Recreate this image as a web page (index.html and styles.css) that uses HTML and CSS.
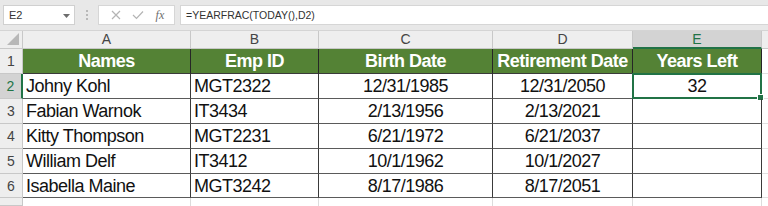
FILE: index.html
```html
<!DOCTYPE html>
<html>
<head>
<meta charset="utf-8">
<link rel="stylesheet" href="styles.css">
</head>
<body>
<div class="fbar">
  <div class="namebox"><span>E2</span><svg class="caret" width="7" height="4" viewBox="0 0 7 4"><path d="M0 0H7L3.5 4Z" fill="#6d6d6d"/></svg></div>
  <div class="dots"><i></i><i></i><i></i></div>
  <div class="fxbox">
    <svg width="10" height="10" viewBox="0 0 10 10"><path d="M1 1L9 9M9 1L1 9" stroke="#b4b4b4" stroke-width="1.2" fill="none"/></svg>
    <svg width="12" height="10" viewBox="0 0 12 10"><path d="M1 5L4.5 8.5L11 1.5" stroke="#b4b4b4" stroke-width="1.2" fill="none"/></svg>
    <span class="fx">fx</span>
  </div>
  <div class="formula">=YEARFRAC(TODAY(),D2)</div>
</div>
<div class="sheet">
  <div class="corner"><svg width="12" height="12" viewBox="0 0 12 12"><path d="M12 0V12H0Z" fill="#b8b8b8"/></svg></div>
  <div class="ch">A</div><div class="ch">B</div><div class="ch">C</div><div class="ch">D</div><div class="ch sel">E</div><div class="ch end"></div>

  <div class="rh">1</div>
  <div class="hd">Names</div><div class="hd">Emp ID</div><div class="hd">Birth Date</div><div class="hd">Retirement Date</div><div class="hd">Years Left</div><div class="blank"></div>

  <div class="rh rsel">2</div>
  <div class="c l">Johny Kohl</div><div class="c l">MGT2322</div><div class="c">12/31/1985</div><div class="c">12/31/2050</div><div class="c active">32<span class="handle"></span></div><div class="blank"></div>

  <div class="rh">3</div>
  <div class="c l">Fabian Warnok</div><div class="c l">IT3434</div><div class="c">2/13/1956</div><div class="c">2/13/2021</div><div class="c"></div><div class="blank"></div>

  <div class="rh">4</div>
  <div class="c l">Kitty Thompson</div><div class="c l">MGT2231</div><div class="c">6/21/1972</div><div class="c">6/21/2037</div><div class="c"></div><div class="blank"></div>

  <div class="rh">5</div>
  <div class="c l">William Delf</div><div class="c l">IT3412</div><div class="c">10/1/1962</div><div class="c">10/1/2027</div><div class="c"></div><div class="blank"></div>

  <div class="rh">6</div>
  <div class="c l">Isabella Maine</div><div class="c l">MGT3242</div><div class="c">8/17/1986</div><div class="c">8/17/2051</div><div class="c"></div><div class="blank"></div>

  <div class="rh"></div>
  <div class="e"></div><div class="e"></div><div class="e"></div><div class="e"></div><div class="e"></div><div class="blank2"></div>
</div>
</body>
</html>
```
FILE: styles.css
```css
html, body {
  margin: 0;
  padding: 0;
}
body {
  width: 768px;
  height: 206px;
  overflow: hidden;
  background: #fff;
  font-family: "Liberation Sans", Arial, sans-serif;
}
.fbar {
  height: 31px;
  box-sizing: border-box;
  background: #e8e8e8;
  border-bottom: 1px solid #d4d4d4;
  display: flex;
  align-items: flex-start;
  padding: 5px 0 0 3px;
}
.namebox {
  width: 72px;
  height: 20px;
  box-sizing: border-box;
  background: #fff;
  border: 1px solid #d0d0d0;
  display: flex;
  align-items: center;
  justify-content: space-between;
  padding: 0 4px 0 5px;
  font-size: 11px;
  color: #333;
}
.caret { margin-top: 1px; }
.dots {
  width: 23px;
  height: 20px;
  display: flex;
  flex-direction: column;
  align-items: center;
  justify-content: center;
  gap: 2px;
}
.dots i {
  display: block;
  width: 2px;
  height: 2px;
  background: #b8b8b8;
}
.fxbox {
  width: 77px;
  height: 20px;
  box-sizing: border-box;
  background: #fff;
  border: 1px solid #d6d6d6;
  display: flex;
  align-items: center;
  justify-content: space-around;
  padding: 0 4px 0 6px;
}
.fx {
  font-family: "Liberation Serif", serif;
  font-style: italic;
  font-size: 12px;
  color: #6e6e6e;
}
.formula {
  flex: 1;
  height: 20px;
  margin-left: 5px;
  box-sizing: border-box;
  background: #fff;
  border: 1px solid #d6d6d6;
  border-right: none;
  font-size: 10.5px;
  color: #333;
  line-height: 18px;
  padding-left: 5px;
}
.sheet {
  display: grid;
  grid-template-columns: 23px 168px 128px 174px 140px 129px 6px;
  grid-template-rows: 18px 25px 25px 25px 25px 25px 24px 8px;
}
.sheet > div {
  box-sizing: border-box;
}
.corner {
  background: #eeeeee;
  border-right: 1px solid #c8c8c8;
  border-bottom: 1px solid #c8c8c8;
  display: flex;
  align-items: flex-end;
  justify-content: flex-end;
  padding: 0 3px 3px 0;
}
.ch {
  background: #eeeeee;
  border-right: 1px solid #c8c8c8;
  border-bottom: 1px solid #c8c8c8;
  font-size: 14px;
  color: #444;
  text-align: center;
  line-height: 17px;
}
.ch.sel {
  background: #d3d3d3;
  color: #217346;
  border-bottom: 2px solid #217346;
}
.ch.end { border-right: none; }
.rh {
  background: #eeeeee;
  border-right: 1px solid #c8c8c8;
  border-bottom: 1px solid #c8c8c8;
  font-size: 14px;
  color: #444;
  text-align: center;
  line-height: 24px;
}
.rh.rsel {
  background: #d3d3d3;
  color: #217346;
  border-right: 2px solid #217346;
}
.hd {
  background: #548235;
  color: #fff;
  font-weight: bold;
  font-size: 18px;
  text-align: center;
  line-height: 24px;
  border-right: 1px solid #262626;
  border-bottom: 1px solid #3a3a3a;
  letter-spacing: -0.5px;
}
.c {
  position: relative;
  font-size: 18px;
  color: #111;
  text-align: center;
  line-height: 24px;
  border-right: 1px solid #3a3a3a;
  border-bottom: 1px solid #5a5a5a;
  letter-spacing: -0.5px;
}
.c.l {
  text-align: left;
  padding-left: 3px;
}
.c.active {
  border: 2px solid #217346;
  line-height: 22px;
  margin: -1px 0 0 -1px;
}
.handle {
  position: absolute;
  right: -4px;
  bottom: -4px;
  width: 5px;
  height: 5px;
  background: #217346;
  border: 1px solid #fff;
}
.blank {
  border-bottom: 1px solid #e0e0e0;
}
.blank2 {
  background: #fff;
}
.e {
  border-right: 1px solid #dcdcdc;
}
```
